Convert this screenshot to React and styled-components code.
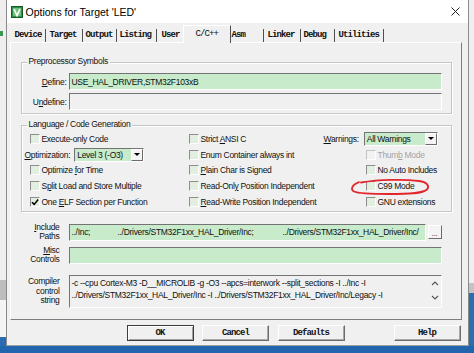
import React from 'react'
import styled, {createGlobalStyle} from 'styled-components'

const GlobalStyle = createGlobalStyle`
  * { box-sizing: border-box; }
  html, body { margin: 0; padding: 0; background: #f0f0f0; }
  body { font-family: "Liberation Sans", Arial, sans-serif; }
`

const GREEN = '#c7ebcb'

const tabs = [
  {label: 'Device', w: 35, pl: 4},
  {label: 'Target', w: 37, pl: 4},
  {label: 'Output', w: 34, pl: 3},
  {label: 'Listing', w: 40, pl: 3},
  {label: 'User', w: 26, pl: 5, bare: true},
  {label: 'C/C++', w: 48, pl: 12, active: true},
  {label: 'Asm', w: 33, pl: 1},
  {label: 'Linker', w: 37, pl: 4},
  {label: 'Debug', w: 34, pl: 3},
  {label: 'Utilities', w: 49, pl: 4},
]

function Check({checked, disabled}) {
  return (
    <CheckBox $disabled={disabled}>
      {checked && (
        <svg width="8" height="8" viewBox="0 0 8 8">
          <path d="M1 4.2 L3.2 6.4 L7.2 1.6" fill="none" stroke="#000" strokeWidth="1.6" />
        </svg>
      )}
    </CheckBox>
  )
}

function Option({children, checked, disabled, indent, mark}) {
  return (
    <CheckRow $indent={indent} $disabled={disabled}>
      <Check checked={checked} disabled={disabled} />
      <span>{children}</span>
      {mark && (
        <Annotation width="82" height="21" viewBox="0 0 82 21">
          <path
            d="M12 6.5 C30 3.5, 55 3, 70 5 C78 6, 81 10, 78 13.5 C74 17.5, 60 18, 40 18 C25 18, 10 18, 5 15.5 C1 13.5, 3 9, 10 6.2"
            fill="none" stroke="#e3262e" strokeWidth="1.8" strokeLinecap="round"
          />
        </Annotation>
      )}
    </CheckRow>
  )
}

function Dropdown({value, width}) {
  return (
    <Select $width={width}>
      <SelectValue>{value}</SelectValue>
      <SelectButton><Arrow /></SelectButton>
    </Select>
  )
}

export default function App() {
  return (
    <>
      <GlobalStyle />
      <Screen>
        <Desk>
          <SideStrip>
            <Band $h={31} $bg="#eeeeee" />
            <Band $h={5} $bg="#3a9a52" $w={3} />
            <Band $h={244} $bg="#eeeeee" />
            <Band $h={20} $bg="#bdbdbd" />
            <Band $h={37} $bg="#f4f4f4" />
            <Band $h={9} $bg="#2b6cb0" />
          </SideStrip>

          <Window>
            <TitleBar>
              <svg width="12" height="12" viewBox="0 0 12 12">
                <rect x="0.5" y="0.5" width="11" height="11" fill="#2f8f45" stroke="#175a27" />
                <rect x="2" y="2" width="8" height="8" fill="#6fc07b" />
                <path d="M3 3 L6 9.5 L9 3" fill="none" stroke="#fff" strokeWidth="1.6" />
              </svg>
              <TitleText>Options for Target 'LED'</TitleText>
              <CloseButton>
                <svg width="9" height="9" viewBox="0 0 9 9">
                  <path d="M0.5 0.5 L8.5 8.5 M8.5 0.5 L0.5 8.5" stroke="#222" strokeWidth="1" />
                </svg>
              </CloseButton>
            </TitleBar>

            <DialogBody>
              <TabStrip>
                {tabs.map(t => (
                  <Tab key={t.label} $w={t.w} $pl={t.pl} $active={t.active} $bare={t.bare}>
                    {t.label}
                  </Tab>
                ))}
              </TabStrip>

              <Page>
                <GroupBox $pt={10} $pb={3}>
                  <GroupTitle>Preprocessor Symbols</GroupTitle>
                  <SymbolRow>
                    <SymbolLabel><Key>D</Key>efine:</SymbolLabel>
                    <Field $bg={GREEN}>USE_HAL_DRIVER,STM32F103xB</Field>
                  </SymbolRow>
                  <SymbolRow $mt={3}>
                    <SymbolLabel>U<Key>n</Key>define:</SymbolLabel>
                    <Field />
                  </SymbolRow>
                </GroupBox>

                <GroupBox $mt={11} $pt={5} $pb={1}>
                  <GroupTitle>Language / Code Generation</GroupTitle>
                  <Columns>
                    <Column $w={164}>
                      <Option indent={5}>Execute-only Code</Option>
                      <LabelRow>
                        <span><Key>O</Key>ptimization:</span>
                        <Dropdown value="Level 3 (-O3)" width={70} />
                      </LabelRow>
                      <Option indent={5}>Optimize <Key>f</Key>or Time</Option>
                      <Option indent={5}>S<Key>p</Key>lit Load and Store Multiple</Option>
                      <Option indent={5} checked>One <Key>E</Key>LF Section per Function</Option>
                    </Column>
                    <Column $w={135}>
                      <Option>Strict <Key>A</Key>NSI C</Option>
                      <Option>Enum Container always int</Option>
                      <Option><Key>P</Key>lain Char is Signed</Option>
                      <Option>Read-Onl<Key>y</Key> Position Independent</Option>
                      <Option><Key>R</Key>ead-Write Position Independent</Option>
                    </Column>
                    <Column>
                      <LabelRow $gap={5}>
                        <span><Key>W</Key>arnings:</span>
                        <Dropdown value="All Warnings" width={74} />
                      </LabelRow>
                      <Option indent={42} disabled>Thum<Key>b</Key> Mode</Option>
                      <Option indent={42}>No Auto Includes</Option>
                      <Option indent={42} mark>C99 Mode</Option>
                      <Option indent={42}>GNU extensions</Option>
                    </Column>
                  </Columns>
                </GroupBox>

                <PathRow $mt={11}>
                  <PathLabel><Key>I</Key>nclude<br />Paths</PathLabel>
                  <Field $bg={GREEN} $width={357}>
                    <Segment $w={46}>../Inc;</Segment>
                    <Segment $w={165}>../Drivers/STM32F1xx_HAL_Driver/Inc;</Segment>
                    <Segment>../Drivers/STM32F1xx_HAL_Driver/Inc/</Segment>
                  </Field>
                  <BrowseButton>...</BrowseButton>
                </PathRow>
                <PathRow $mt={4}>
                  <PathLabel><Key>M</Key>isc<br />Controls</PathLabel>
                  <Field $bg={GREEN} />
                </PathRow>
                <PathRow $mt={10}>
                  <PathLabel>Compiler<br />control<br />string</PathLabel>
                  <ControlString>
                    <ControlText>
                      -c --cpu Cortex-M3 -D__MICROLIB -g -O3 --apcs=interwork --split_sections -I ../Inc -I<br />
                      ../Drivers/STM32F1xx_HAL_Driver/Inc -I ../Drivers/STM32F1xx_HAL_Driver/Inc/Legacy -I
                    </ControlText>
                    <ScrollArrows>
                      <svg width="8" height="5" viewBox="0 0 8 5"><path d="M1 4 L4 1 L7 4" fill="none" stroke="#555" strokeWidth="1.1" /></svg>
                      <svg width="8" height="5" viewBox="0 0 8 5"><path d="M1 1 L4 4 L7 1" fill="none" stroke="#555" strokeWidth="1.1" /></svg>
                    </ScrollArrows>
                  </ControlString>
                </PathRow>
              </Page>

              <ButtonRow>
                <PushButton $default>OK</PushButton>
                <PushButton>Cancel</PushButton>
                <PushButton>Defaults</PushButton>
                <PushButton $push>Help</PushButton>
              </ButtonRow>
            </DialogBody>
          </Window>

          <SideStrip>
            <Band $h={283} $bg="#efefef" />
            <Band $h={10} $bg="#c3c3c3" />
            <Band $h={53} $bg="#2d6db2" />
          </SideStrip>
        </Desk>
        <Taskbar />
      </Screen>
    </>
  )
}

const Screen = styled.div`
  width: 474px;
  height: 353px;
  display: flex;
  flex-direction: column;
  overflow: hidden;
`

const Desk = styled.div`
  display: flex;
  height: 346px;
`

const SideStrip = styled.div`
  flex: 1;
  display: flex;
  flex-direction: column;
`

const Band = styled.div`
  height: ${p => p.$h}px;
  width: ${p => (p.$w ? `${p.$w}px` : '100%')};
  background: ${p => p.$bg};
`

const Taskbar = styled.div`
  flex: 1;
  background: #2165ae;
`

const Window = styled.div`
  width: 463px;
  flex: none;
  display: flex;
  flex-direction: column;
  background: #f0f0f0;
  border-left: 1px solid #8a8a8a;
  border-right: 1px solid #8a8a8a;
  border-bottom: 1px solid #a0a0a0;
  color: #111;
`

const TitleBar = styled.div`
  height: 23px;
  flex: none;
  display: flex;
  align-items: center;
  gap: 3px;
  padding: 0 8px 0 4px;
  background: #fff;
`

const TitleText = styled.div`
  font-size: 10.5px;
  color: #000;
`

const CloseButton = styled.div`
  margin-left: auto;
  display: flex;
`

const DialogBody = styled.div`
  flex: 1;
  padding: 2px 6px 0 3px;
  font-size: 8.5px;
  letter-spacing: -0.3px;
`

const TabStrip = styled.div`
  height: 17px;
  display: flex;
  align-items: flex-end;
  padding-left: 1px;
`

const Tab = styled.div`
  flex: none;
  width: ${p => p.$w}px;
  height: ${p => (p.$active ? 18 : 13)}px;
  padding-left: ${p => p.$pl}px;
  line-height: ${p => (p.$active ? 16 : 13)}px;
  font-family: "Liberation Mono", "DejaVu Sans Mono", monospace;
  font-size: 9px;
  font-weight: ${p => (p.$active ? 400 : 700)};
  letter-spacing: -0.9px;
  white-space: nowrap;
  color: #111;
  border-right: 1px solid ${p => (p.$bare ? 'transparent' : '#505050')};
  ${p => p.$active && `
    position: relative;
    z-index: 1;
    margin-bottom: -1px;
    background: #f0f0f0;
    border-top: 1px solid #fff;
    border-left: 1px solid #fff;
  `}
`

const Page = styled.div`
  height: 278px;
  padding: 19px 9px 0 10px;
  border-top: 1px solid #fff;
  border-left: 1px solid #fff;
  border-right: 1px solid #7d7d7d;
  border-bottom: 1px solid #7d7d7d;
`

const GroupBox = styled.div`
  position: relative;
  margin-top: ${p => p.$mt || 0}px;
  padding: ${p => p.$pt}px 9px ${p => p.$pb}px 0;
  border: 1px solid #c6c6c6;
  box-shadow: inset 1px 1px 0 #fff, 1px 1px 0 #fff;
`

const GroupTitle = styled.div`
  position: absolute;
  top: -8px;
  left: 5px;
  padding: 0 2px;
  line-height: 12px;
  background: #f0f0f0;
`

const SymbolRow = styled.div`
  display: flex;
  align-items: center;
  gap: 2px;
  margin-top: ${p => p.$mt || 0}px;
`

const SymbolLabel = styled.div`
  width: 45px;
  text-align: right;
`

const Key = styled.span`
  text-decoration: underline;
`

const Field = styled.div`
  flex: ${p => (p.$width ? 'none' : 1)};
  width: ${p => (p.$width ? `${p.$width}px` : 'auto')};
  height: 17px;
  display: flex;
  align-items: center;
  padding-left: 2px;
  overflow: hidden;
  white-space: nowrap;
  background: ${p => p.$bg || '#f0f0f0'};
  border-top: 1px solid #747474;
  border-left: 1px solid #747474;
  border-bottom: 1px solid #fff;
  border-right: 1px solid #fff;
`

const Segment = styled.span`
  flex: none;
  width: ${p => (p.$w ? `${p.$w}px` : 'auto')};
`

const Columns = styled.div`
  display: flex;
  padding-left: 3px;
`

const Column = styled.div`
  flex: ${p => (p.$w ? 'none' : 1)};
  width: ${p => (p.$w ? `${p.$w}px` : 'auto')};
  display: flex;
  flex-direction: column;
`

const CheckRow = styled.div`
  position: relative;
  height: 15.75px;
  display: flex;
  align-items: center;
  gap: 2px;
  padding-left: ${p => p.$indent || 0}px;
  white-space: nowrap;
  color: ${p => (p.$disabled ? '#a3a3a3' : '#111')};
`

const CheckBox = styled.div`
  flex: none;
  width: 10px;
  height: 10px;
  display: flex;
  align-items: center;
  justify-content: center;
  background: ${p => (p.$disabled ? '#f2f2f2' : '#e2efe0')};
  border-top: 1px solid ${p => (p.$disabled ? '#c4c4c4' : '#8e8e8e')};
  border-left: 1px solid ${p => (p.$disabled ? '#c4c4c4' : '#8e8e8e')};
  border-bottom: 1px solid #fdfdfd;
  border-right: 1px solid #fdfdfd;
`

const Annotation = styled.svg`
  position: absolute;
  left: 25px;
  top: -2px;
  pointer-events: none;
`

const LabelRow = styled.div`
  height: 15.75px;
  display: flex;
  align-items: center;
  gap: ${p => p.$gap || 4}px;
  white-space: nowrap;
`

const Select = styled.div`
  flex: none;
  width: ${p => p.$width}px;
  height: 14px;
  display: flex;
  background: ${GREEN};
  border-top: 1px solid #747474;
  border-left: 1px solid #747474;
  border-bottom: 1px solid #fff;
  border-right: 1px solid #fff;
`

const SelectValue = styled.div`
  flex: 1;
  padding-left: 2px;
  line-height: 12px;
`

const SelectButton = styled.div`
  width: 12px;
  display: flex;
  align-items: center;
  justify-content: center;
  background: #f4f4f4;
  border: 1px solid;
  border-color: #fff #6c6c6c #6c6c6c #fff;
`

const Arrow = styled.div`
  width: 0;
  height: 0;
  border-left: 3px solid transparent;
  border-right: 3px solid transparent;
  border-top: 3px solid #000;
`

const PathRow = styled.div`
  display: flex;
  align-items: center;
  gap: 9px;
  margin-top: ${p => p.$mt}px;
  padding-right: 10px;
`

const PathLabel = styled.div`
  flex: none;
  width: 39px;
  text-align: right;
  line-height: 9.5px;
`

const BrowseButton = styled.div`
  flex: none;
  width: 14px;
  height: 14px;
  margin-left: -7px;
  display: flex;
  align-items: flex-end;
  justify-content: center;
  padding-bottom: 1px;
  line-height: 8px;
  color: #555;
  background: #f4f4f4;
  border: 1px solid;
  border-color: #fff #6c6c6c #6c6c6c #fff;
`

const ControlString = styled.div`
  flex: 1;
  height: 33px;
  display: flex;
  border-top: 1px solid #747474;
  border-left: 1px solid #747474;
  border-bottom: 1px solid #fff;
  border-right: 1px solid #fff;
`

const ControlText = styled.div`
  flex: 1;
  padding: 1px 0 0 2px;
  line-height: 12px;
  white-space: nowrap;
  overflow: hidden;
`

const ScrollArrows = styled.div`
  width: 12px;
  display: flex;
  flex-direction: column;
  justify-content: space-between;
  align-items: center;
  padding: 5px 0 7px;
`

const ButtonRow = styled.div`
  height: 16px;
  margin-top: 5px;
  display: flex;
  gap: 8.5px;
  padding: 0 1px 0 117px;
`

const PushButton = styled.div`
  width: 67px;
  height: 16px;
  display: flex;
  align-items: center;
  justify-content: center;
  margin-left: ${p => (p.$push ? 'auto' : 0)};
  font-family: "Liberation Mono", "DejaVu Sans Mono", monospace;
  font-size: 9px;
  font-weight: 700;
  letter-spacing: -0.9px;
  color: #111;
  background: #f0f0f0;
  border: 1px solid;
  border-color: ${p => (p.$default ? '#3c3c3c' : '#fff #6c6c6c #6c6c6c #fff')};
  box-shadow: ${p => (p.$default ? 'inset 1px 1px 0 #fff, inset -1px -1px 0 #a0a0a0' : 'inset -1px -1px 0 #a8a8a8')};
`
